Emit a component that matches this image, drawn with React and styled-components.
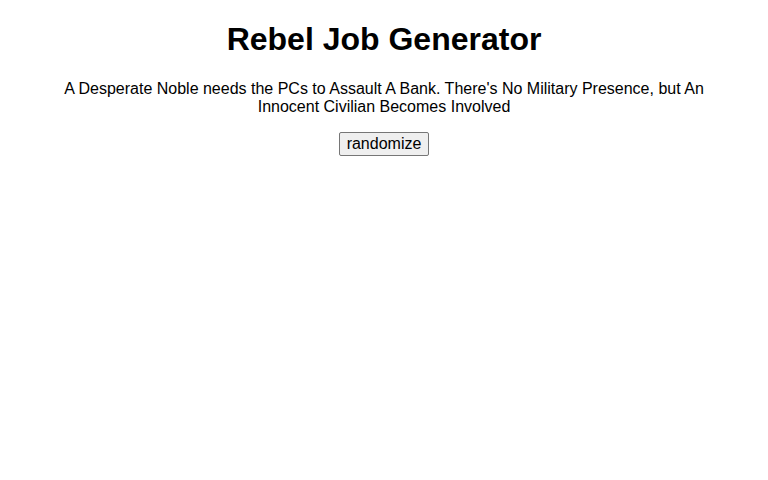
import React, { useState } from "react";
import styled, { createGlobalStyle } from "styled-components";

const GlobalStyle = createGlobalStyle`
  body {
    margin: 0 8px;
    font-family: "Liberation Sans", Arial, sans-serif;
    background: #ffffff;
    color: #000000;
  }
`;

const Page = styled.main`
  text-align: center;
`;

const Title = styled.h1`
  font-size: 32px;
  font-weight: bold;
  margin: 21.44px 0;
`;

const Job = styled.p`
  font-size: 16px;
  line-height: normal;
  margin: 16px 0;
  padding: 0 56px;
`;

const Button = styled.button`
  font-family: "Liberation Sans", Arial, sans-serif;
  font-size: 16px;
  color: #000;
  background: #efefef;
  border: 1px solid #767676;
  border-radius: 2px;
  padding: 2px 7px;
  cursor: pointer;
  &:hover {
    background: #e5e5e5;
  }
`;

const patrons = ["A Desperate Noble", "A Shady Merchant", "An Exiled General"];
const jobs = ["Assault A Bank", "Rescue A Prisoner", "Steal A Ledger"];
const twists = [
  "An Innocent Civilian Becomes Involved",
  "The Target Was Moved",
  "A Rival Crew Shows Up",
];
const conditions = ["No Military Presence", "A Heavy Patrol", "A Curfew In Effect"];

const pick = (list) => list[Math.floor(Math.random() * list.length)];

const describe = ({ patron, task, condition, twist }) =>
  `${patron} needs the PCs to ${task}. There's ${condition}, but ${twist}`;

export default function App() {
  const [job, setJob] = useState({
    patron: patrons[0],
    task: jobs[0],
    condition: conditions[0],
    twist: twists[0],
  });

  const randomize = () =>
    setJob({
      patron: pick(patrons),
      task: pick(jobs),
      condition: pick(conditions),
      twist: pick(twists),
    });

  return (
    <>
      <GlobalStyle />
      <Page>
        <Title>Rebel Job Generator</Title>
        <Job>{describe(job)}</Job>
        <Button onClick={randomize}>randomize</Button>
      </Page>
    </>
  );
}
